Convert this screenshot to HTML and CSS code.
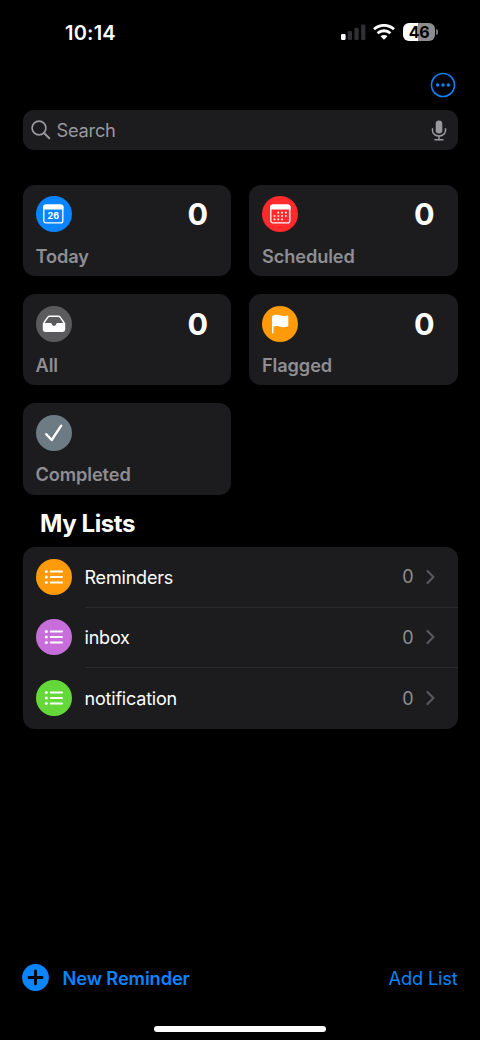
FILE: index.html
```html
<!DOCTYPE html>
<html lang="en">
<head>
<meta charset="utf-8">
<meta name="viewport" content="width=device-width, initial-scale=1">
<title>Reminders</title>
<link rel="stylesheet" href="styles.css">
</head>
<body>
<div class="screen">
  <header class="status">
    <span class="time">10:14</span>
    <svg class="signal" width="25" height="16" viewBox="0 0 25 16">
      <rect x="0" y="10" width="4.6" height="6" rx="1.2" fill="#fff"/>
      <g fill="#303032"><rect x="6.7" y="7" width="4.3" height="9" rx="1.2"/><rect x="13.4" y="3.7" width="4.3" height="12.3" rx="1.2"/><rect x="20.1" y="0.4" width="4.3" height="15.6" rx="1.2"/></g>
    </svg>
    <svg class="wifi" width="22" height="16" viewBox="0 0 22 16" fill="none" stroke="#fff" stroke-width="2.8">
      <path d="M1 5.3C6.7 0 15.3 0 21 5.3M4.6 9.2c3.6-3.3 9.2-3.3 12.8 0"/>
      <path d="M11 15.8 7.5 12.3c2-1.8 5-1.8 7 0Z" fill="#fff" stroke="none"/>
    </svg>
    <span class="battery"><span class="level">46</span></span>
    <span class="battery-cap"></span>
  </header>

  <div class="toolbar">
    <svg width="26" height="26" viewBox="0 0 26 26"><circle cx="13" cy="13" r="11.5" fill="none" stroke="#0a84ff" stroke-width="1.6"/><g fill="#0a84ff"><circle cx="7.6" cy="13" r="1.7"/><circle cx="13" cy="13" r="1.7"/><circle cx="18.4" cy="13" r="1.7"/></g></svg>
  </div>

  <div class="search">
    <svg width="20" height="20" viewBox="0 0 20 20" fill="none" stroke="#98989d" stroke-width="1.7" stroke-linecap="round"><circle cx="8" cy="8" r="6.9"/><path d="m13 13 5.3 5.3" stroke-width="2"/></svg>
    <span class="search-text">Search</span>
    <svg width="16" height="21" viewBox="0 0 16 21" fill="none" stroke="#98989d" stroke-width="1.5" stroke-linecap="round"><rect x="4.7" y=".5" width="6.6" height="13" rx="3.3" fill="#98989d" stroke="none"/><path d="M1.5 8.7v1.7a6.5 5.7 0 0 0 13 0V8.7M8 16.3v3.3M4 19.8h8"/></svg>
  </div>

  <main>
    <section class="cards">
      <article class="card">
        <div class="card-top">
          <span class="badge blue"><svg width="21" height="20" viewBox="0 0 21 20"><rect x=".8" y="1.1" width="19" height="17.8" rx="2.2" fill="none" stroke="#fff" stroke-width="1.3"/><path d="M.1 5.5V3q0-2.5 2.5-2.5H18q2.5 0 2.5 2.5v2.5Z" fill="#fff"/><text x="10.3" y="15.2" class="day">26</text></svg></span>
          <span class="count">0</span>
        </div>
        <div class="label">Today</div>
      </article>
      <article class="card">
        <div class="card-top">
          <span class="badge red"><svg width="21" height="20" viewBox="0 0 21 20"><rect x=".8" y="1.1" width="19" height="17.8" rx="2.2" fill="none" stroke="#fff" stroke-width="1.3"/><path d="M.1 5.5V3q0-2.5 2.5-2.5H18q2.5 0 2.5 2.5v2.5Z" fill="#fff"/><g fill="none" stroke="#fff" stroke-width="1.7" stroke-dasharray="1.7 2.05"><path d="M7.4 8.6h9.3M3.7 12h13M3.7 15.4h9.2"/></g></svg></span>
          <span class="count">0</span>
        </div>
        <div class="label">Scheduled</div>
      </article>
      <article class="card">
        <div class="card-top">
          <span class="badge gray"><svg width="24" height="18" viewBox="0 0 24 18"><path d="M1.7 8 5.9 2.1Q6.5 1.3 7.5 1.3h9q1 0 1.6.8L22.3 8" fill="none" stroke="#fff" stroke-width="1.4"/><path d="M.8 8h8.1q.5 0 .6.6Q10 11 12 11t2.5-2.4q.1-.6.6-.6h8.1v6.6q0 2.4-2.4 2.4H3.2Q.8 17 .8 14.6Z" fill="#fff"/></svg></span>
          <span class="count">0</span>
        </div>
        <div class="label">All</div>
      </article>
      <article class="card">
        <div class="card-top">
          <span class="badge orange"><svg width="18" height="20" viewBox="0 0 18 20" fill="#fff"><path d="M1 2.2C3.7.2 6.4.5 9 1.3c2.7.8 5 .8 7.4.2q.9-.2.9.7v9.6q0 .6-.7.8c-2.8.9-5.4.6-8-.1-2.4-.6-4-.6-6.1.2v6q0 .8-.8.8T1 18.7Z"/></svg></span>
          <span class="count">0</span>
        </div>
        <div class="label">Flagged</div>
      </article>
      <article class="card">
        <div class="card-top">
          <span class="badge slate"><svg width="18" height="18" viewBox="0 0 18 18" fill="none" stroke="#fff" stroke-width="2.4" stroke-linecap="round" stroke-linejoin="round"><path d="M1.3 10.2 6.7 16 16.2 1.7"/></svg></span>
        </div>
        <div class="label">Completed</div>
      </article>
    </section>

    <h2>My Lists</h2>

    <ul class="lists">
      <li><span class="badge amber"><svg class="bullets" width="20" height="16" viewBox="0 0 20 16"><g><circle cx="2.3" cy="2.6" r="1.5"/><circle cx="2.3" cy="8" r="1.5"/><circle cx="2.3" cy="13.4" r="1.5"/></g><path d="M6.7 2.6h11.3M6.7 8h11.3M6.7 13.4h11.3"/></svg></span>
        <div class="row"><span class="name">Reminders</span><span class="num">0</span><svg class="chevron" width="9" height="14" viewBox="0 0 9 14"><path d="m1.5 1 5.9 6-5.9 6"/></svg></div></li>
      <li><span class="badge purple"><svg class="bullets" width="20" height="16" viewBox="0 0 20 16"><g><circle cx="2.3" cy="2.6" r="1.5"/><circle cx="2.3" cy="8" r="1.5"/><circle cx="2.3" cy="13.4" r="1.5"/></g><path d="M6.7 2.6h11.3M6.7 8h11.3M6.7 13.4h11.3"/></svg></span>
        <div class="row"><span class="name">inbox</span><span class="num">0</span><svg class="chevron" width="9" height="14" viewBox="0 0 9 14"><path d="m1.5 1 5.9 6-5.9 6"/></svg></div></li>
      <li><span class="badge green"><svg class="bullets" width="20" height="16" viewBox="0 0 20 16"><g><circle cx="2.3" cy="2.6" r="1.5"/><circle cx="2.3" cy="8" r="1.5"/><circle cx="2.3" cy="13.4" r="1.5"/></g><path d="M6.7 2.6h11.3M6.7 8h11.3M6.7 13.4h11.3"/></svg></span>
        <div class="row"><span class="name">notification</span><span class="num">0</span><svg class="chevron" width="9" height="14" viewBox="0 0 9 14"><path d="m1.5 1 5.9 6-5.9 6"/></svg></div></li>
    </ul>
  </main>

  <footer class="actions">
    <svg width="27" height="27" viewBox="0 0 27 27"><circle cx="13.5" cy="13.5" r="13.4" fill="#0a84ff"/><path d="M13.5 7v13M7 13.5h13" stroke="#000" stroke-width="2.9" stroke-linecap="round"/></svg>
    <span class="new">New Reminder</span>
    <span class="add">Add List</span>
  </footer>
  <div class="home"></div>
</div>
</body>
</html>
```
FILE: styles.css
```css
* { box-sizing: border-box; }
body { margin: 0; background: #000; color: #fff; font-family: Inter, "Liberation Sans", sans-serif; }
svg { display: block; flex: none; }
.screen { width: 480px; height: 1040px; display: flex; flex-direction: column; overflow: hidden; background: #000; }

.status { height: 64px; display: flex; align-items: center; padding-left: 65px; flex: none; }
.time { width: 275.5px; padding-top: 1px; font-size: 20px; font-weight: 600; line-height: 24px; letter-spacing: .2px; }
.wifi { margin-left: 7.5px; }
.battery { width: 32px; height: 18px; margin-left: 8px; border-radius: 6px; background: linear-gradient(90deg, #fff 47%, #8d8d8f 47%); display: flex; align-items: center; justify-content: center; }
.level { color: #000; font-size: 16px; font-weight: 700; line-height: 18px; letter-spacing: -.3px; }
.battery-cap { width: 2px; height: 6px; margin-left: 1px; border-radius: 0 2px 2px 0; background: #747476; }

.toolbar { height: 46px; padding: 7.5px 24px 0 0; display: flex; justify-content: flex-end; flex: none; }
.search { height: 40px; margin: 0 22.5px; padding: 0 10.5px 0 8.5px; border-radius: 11px; background: #1c1c1e; display: flex; align-items: center; flex: none; }
.search-text { flex: 1; padding-left: 5.5px; color: #98989d; font-size: 18.3px; letter-spacing: -.25px; }

main { padding: 34.7px 22.5px 0; flex: 1; }
.cards { display: grid; grid-template-columns: 1fr 1fr; gap: 18px; grid-auto-rows: 91.4px; }
.card { padding: 11.6px 13px 0; border-radius: 12px; background: #1c1c1e; }
.card-top { display: flex; height: 36px; justify-content: space-between; }
.badge { width: 36px; height: 36px; border-radius: 50%; display: flex; align-items: center; justify-content: center; flex: none; }
.blue { background: #0a84ff; }
.red { background: #ff2a2c; }
.gray { background: #5b5b5d; }
.orange, .amber { background: #ff9a0a; }
.slate { background: #6d7b84; }
.purple { background: #c86edb; }
.green { background: #64d838; }
.day { font: 700 9px Inter, sans-serif; fill: #fff; text-anchor: middle; }
.count { padding-right: 10px; font-size: 30.5px; font-weight: 700; line-height: 36px; }
.label { margin-top: 12.4px; color: #8e8e93; font-size: 18.2px; font-weight: 600; line-height: 22px; letter-spacing: -.1px; }

h2 { margin: 14px 0 0 17.5px; font-size: 24px; font-weight: 700; line-height: 30px; letter-spacing: -.4px; }
.lists { margin: 8.1px 0 0; padding: 0; list-style: none; border-radius: 12px; background: #1c1c1e; }
.lists li { height: 60.7px; padding-left: 13px; display: flex; align-items: center; }
.lists .badge { margin-bottom: 1px; }
.row { height: 100%; flex: 1; margin-left: 13px; padding-right: 22.5px; display: flex; align-items: center; border-bottom: 1px solid #2a2a2c; }
li:last-child .row { border-bottom-color: transparent; }
.name { flex: 1; padding-top: 1px; font-size: 18px; letter-spacing: -.2px; }
.num { color: #8e8e93; font-size: 18px; }
.chevron { margin-left: 12.5px; fill: none; stroke: #59595d; stroke-width: 2.1; stroke-linecap: round; stroke-linejoin: round; }
.bullets { fill: none; stroke: #fff; stroke-width: 2; stroke-linecap: round; }
.bullets g { fill: #fff; stroke: none; }

.actions { height: 28px; margin: 0 22.5px 34px 22px; display: flex; align-items: center; color: #0a84ff; flex: none; }
.new { flex: 1; padding-left: 13.5px; font-size: 18.3px; font-weight: 600; letter-spacing: -.13px; }
.add { font-size: 18.3px; letter-spacing: -.2px; }
.home { width: 172px; height: 6px; margin: 0 auto 8.5px; border-radius: 3px; background: #fff; flex: none; }
```
